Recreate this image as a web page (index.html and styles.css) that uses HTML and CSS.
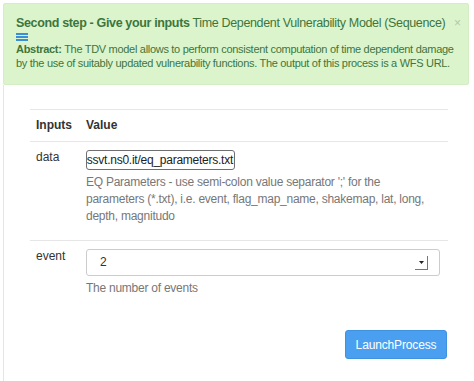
FILE: index.html
```html
<!DOCTYPE html>
<html>
<head>
<meta charset="utf-8">
<link rel="stylesheet" href="styles.css">
</head>
<body>
<div class="page">
  <div class="alert">
    <div class="title"><b>Second step - Give your inputs</b> Time Dependent Vulnerability Model (Sequence)<span class="close">×</span></div>
    <div class="menu"><svg width="12" height="8" viewBox="0 0 12 8"><rect x="0" y="0" width="12" height="2" fill="#3b8fd6"/><rect x="0" y="3" width="12" height="2" fill="#3b8fd6"/><rect x="0" y="6" width="12" height="2" fill="#3b8fd6"/></svg></div>
    <div class="abstract"><b>Abstract:</b> The TDV model allows to perform consistent computation of time dependent damage by the use of suitably updated vulnerability functions. The output of this process is a WFS URL.</div>
  </div>
  <div class="panel">
    <table class="inputs">
      <colgroup><col class="w1"><col class="w2"></colgroup>
      <thead>
        <tr><th class="c1">Inputs</th><th class="c2">Value</th></tr>
      </thead>
      <tbody>
        <tr>
          <td class="c1">data</td>
          <td class="c2">
            <div class="textbox"><span>ssvt.ns0.it/eq_parameters.txt</span></div>
            <div class="help">EQ Parameters - use semi-colon value separator ';' for the parameters (*.txt), i.e. event, flag_map_name, shakemap, lat, long, depth, magnitudo</div>
          </td>
        </tr>
        <tr>
          <td class="c1">event</td>
          <td class="c2">
            <div class="select"><span>2</span><span class="arrow"><svg width="5" height="3" viewBox="0 0 5 3"><path d="M0 0H5L2.5 3Z" fill="#222"/></svg></span></div>
            <div class="help">The number of events</div>
          </td>
        </tr>
      </tbody>
    </table>
    <div class="actions"><button class="btn">LaunchProcess</button></div>
  </div>
</div>
</body>
</html>
```
FILE: styles.css
```css
html, body { margin: 0; padding: 0; background: #fff; }
body { font-family: "Liberation Sans", Arial, sans-serif; color: #333; width: 474px; height: 381px; overflow: hidden; }
.page { padding: 3px 5px 0 3px; }
.alert {
  background: #dcf4cc;
  color: #3c763d;
  padding: 12px 12px 14px 12px;
  border: 1px solid #d4edc4;
  border-radius: 2px;
}
.title { font-size: 12.5px; line-height: 15px; letter-spacing: -0.35px; white-space: nowrap; position: relative; }
.close { position: absolute; right: -5px; top: 0; color: #b3c8aa; font-size: 12px; letter-spacing: 0; }
.menu { height: 11px; padding-top: 2px; box-sizing: border-box; display: flex; align-items: flex-start; }
.menu svg { display: block; }
.abstract { font-size: 11px; line-height: 14px; letter-spacing: -0.3px; }
.panel { border-left: 1px solid #e6e6e0; padding: 24px 21px 0 26px; height: 290px; }
.inputs { width: 418px; table-layout: fixed; border-collapse: collapse; font-size: 12px; }
.w1 { width: 56px; }
.w2 { width: 362px; }
.inputs th { text-align: left; font-weight: bold; padding: 8px 0; border-top: 1px solid #e6e6e6; border-bottom: 1px solid #e6e6e6; line-height: 15px; }
.inputs td { vertical-align: top; padding: 8px 0 15px 0; border-bottom: 1px solid #e6e6e6; line-height: 15px; }
.inputs tbody tr:last-child td { border-bottom: none; }
.inputs .c1 { padding-left: 6px; }
.inputs .c2 { padding-right: 8px; }
.textbox {
  width: 145px; height: 18px; border: 1px solid #6f6f6f; border-radius: 3px;
  font-size: 12px; line-height: 18px; padding: 0 1px; overflow: hidden; white-space: nowrap; color: #222;
  display: flex; justify-content: flex-end; letter-spacing: -0.25px;
}
.textbox span { flex: none; }
.help { color: #777; font-size: 12px; line-height: 17px; margin-top: 4px; letter-spacing: -0.25px; width: 346px; }
.select {
  width: 354px; box-sizing: border-box;
  height: 27px; border: 1px solid #ccc; border-radius: 3px; display: flex; align-items: center; justify-content: space-between;
  padding: 0 11px 0 13px; color: #333; font-size: 12px;
}
.arrow { width: 13px; height: 14px; border-right: 1px solid #777; border-bottom: 1px solid #777; display: flex; align-items: center; justify-content: center; box-sizing: border-box; }
.actions { display: flex; justify-content: flex-end; padding: 18px 1px 0 0; }
.btn {
  background: #4a9ff0; color: #fff; border: 1px solid #3f92e0; border-radius: 3px;
  font-family: "Liberation Sans", Arial, sans-serif; font-size: 12px; letter-spacing: -0.15px; height: 29px; width: 102px; padding: 0;
}
```
